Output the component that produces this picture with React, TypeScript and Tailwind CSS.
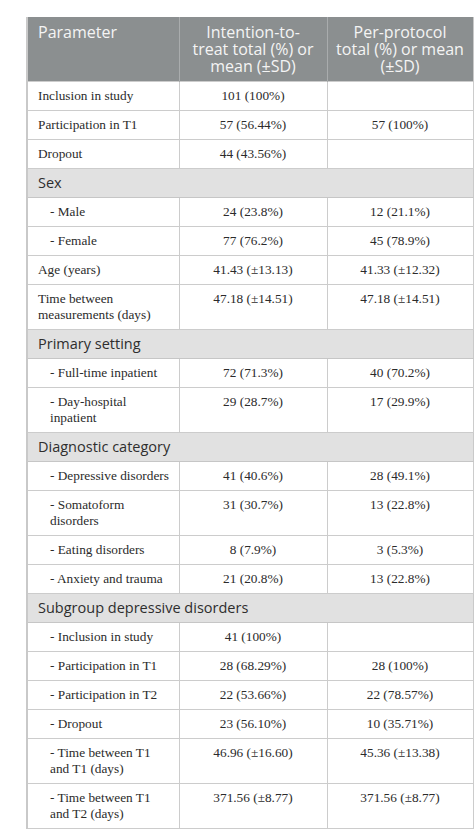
import React from "react";

type Row =
  | { kind: "data"; label: string[]; a: string; b: string; indent?: boolean }
  | { kind: "section"; label: string };

const rows: Row[] = [
  { kind: "data", label: ["Inclusion in study"], a: "101 (100%)", b: "" },
  { kind: "data", label: ["Participation in T1"], a: "57 (56.44%)", b: "57 (100%)" },
  { kind: "data", label: ["Dropout"], a: "44 (43.56%)", b: "" },
  { kind: "section", label: "Sex" },
  { kind: "data", label: ["- Male"], a: "24 (23.8%)", b: "12 (21.1%)", indent: true },
  { kind: "data", label: ["- Female"], a: "77 (76.2%)", b: "45 (78.9%)", indent: true },
  { kind: "data", label: ["Age (years)"], a: "41.43 (\u00b113.13)", b: "41.33 (\u00b112.32)" },
  { kind: "data", label: ["Time between", "measurements (days)"], a: "47.18 (\u00b114.51)", b: "47.18 (\u00b114.51)" },
  { kind: "section", label: "Primary setting" },
  { kind: "data", label: ["- Full-time inpatient"], a: "72 (71.3%)", b: "40 (70.2%)", indent: true },
  { kind: "data", label: ["- Day-hospital", "inpatient"], a: "29 (28.7%)", b: "17 (29.9%)", indent: true },
  { kind: "section", label: "Diagnostic category" },
  { kind: "data", label: ["- Depressive disorders"], a: "41 (40.6%)", b: "28 (49.1%)", indent: true },
  { kind: "data", label: ["- Somatoform", "disorders"], a: "31 (30.7%)", b: "13 (22.8%)", indent: true },
  { kind: "data", label: ["- Eating disorders"], a: "8 (7.9%)", b: "3 (5.3%)", indent: true },
  { kind: "data", label: ["- Anxiety and trauma"], a: "21 (20.8%)", b: "13 (22.8%)", indent: true },
  { kind: "section", label: "Subgroup depressive disorders" },
  { kind: "data", label: ["- Inclusion in study"], a: "41 (100%)", b: "", indent: true },
  { kind: "data", label: ["- Participation in T1"], a: "28 (68.29%)", b: "28 (100%)", indent: true },
  { kind: "data", label: ["- Participation in T2"], a: "22 (53.66%)", b: "22 (78.57%)", indent: true },
  { kind: "data", label: ["- Dropout"], a: "23 (56.10%)", b: "10 (35.71%)", indent: true },
  { kind: "data", label: ["- Time between T1", "and T1 (days)"], a: "46.96 (\u00b116.60)", b: "45.36 (\u00b113.38)", indent: true },
  { kind: "data", label: ["- Time between T1", "and T2 (days)"], a: "371.56 (\u00b18.77)", b: "371.56 (\u00b18.77)", indent: true },
];

const serif = "font-['Liberation_Serif',serif]";
const sans = "font-['Open_Sans',sans-serif]";

export default function App() {
  return (
    <div className="w-[474px] h-[831px] bg-white overflow-hidden pt-[17px] pl-[26px]">
      <table className="table-fixed border-collapse w-[446px]">
        <colgroup>
          <col className="w-[152px]" />
          <col className="w-[148px]" />
          <col className="w-[146px]" />
        </colgroup>
        <thead>
          <tr className={`bg-[#8b8f90] text-[#f4f4f4] ${sans} text-[16px] leading-[17px]`}>
            <th className="align-top text-left font-normal pl-[10px] pr-[6px] pt-[7px] pb-[6px] h-[64px] border-l-2 border-[#c9c9c9]">
              Parameter
            </th>
            <th className="align-top text-center font-normal px-[2px] pt-[7px] pb-[6px] border-l border-[#a9acad] whitespace-nowrap">
              Intention-to-
              <br />
              treat total (%) or
              <br />
              mean (&plusmn;SD)
            </th>
            <th className="align-top text-center font-normal px-[2px] pt-[7px] pb-[6px] border-l border-[#a9acad] border-r border-r-[#c9c9c9] whitespace-nowrap">
              Per-protocol
              <br />
              total (%) or mean
              <br />
              (&plusmn;SD)
            </th>
          </tr>
        </thead>
        <tbody>
          {rows.map((r, i) =>
            r.kind === "section" ? (
              <tr key={i} className="bg-[#e1e1e1]">
                <td
                  colSpan={3}
                  className={`${sans} text-[14.5px] leading-[16px] text-[#2e2e2e] pl-[10px] pt-[6px] pb-[6px] h-[29px] border-y border-[#c6c6c6] border-l-2 border-l-[#c9c9c9] border-r border-r-[#c9c9c9] whitespace-nowrap`}
                >
                  {r.label}
                </td>
              </tr>
            ) : (
              <tr key={i} className={`${serif} text-[13.3px] leading-[16px] text-[#2b2b2b]`}>
                <td
                  className={`align-top ${r.indent ? "pl-[22px]" : "pl-[10px]"} pr-[4px] pt-[6px] pb-[6px] border-y border-[#cccccc] border-l-2 border-l-[#c9c9c9] whitespace-nowrap`}
                >
                  {r.label.map((l, j) => (
                    <div key={j}>{l}</div>
                  ))}
                </td>
                <td className="align-top text-center px-[4px] pt-[6px] pb-[6px] border border-[#cccccc] whitespace-nowrap">{r.a}</td>
                <td className="align-top text-center px-[4px] pt-[6px] pb-[6px] border border-[#cccccc] whitespace-nowrap">{r.b}</td>
              </tr>
            )
          )}
        </tbody>
      </table>
    </div>
  );
}
